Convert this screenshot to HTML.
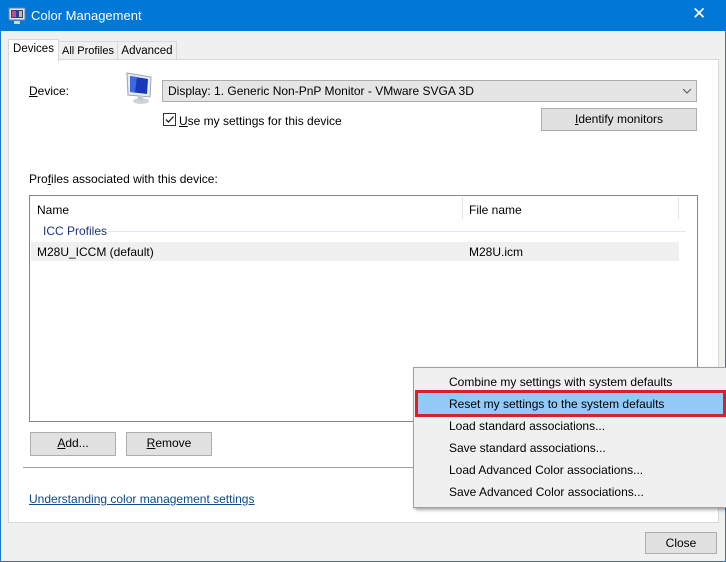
<!DOCTYPE html>
<html><head><style>
*{margin:0;padding:0;box-sizing:border-box}
body{width:726px;height:562px;overflow:hidden;font-family:"Liberation Sans",sans-serif;font-size:12px;color:#000;background:#f0f0f0;position:relative}
.a{position:absolute}
.btn{position:absolute;background:#e1e1e1;border:1px solid #adadad;text-align:center;line-height:20px;font-size:12px}
u{text-decoration:underline}
.mi{position:absolute;left:449px;font-size:12px}
</style></head><body>
<div class="a" style="left:0;top:0;width:726px;height:562px;border:1px solid #1979ca;border-top:none"></div>
<div class="a" style="left:0;top:0;width:726px;height:31px;background:#0078d7"></div>
<svg class="a" style="left:8px;top:7px" width="18" height="18"><rect x="1" y="1" width="16" height="12" fill="#dfe6ef" stroke="#6b7f99"/><rect x="3" y="3" width="12" height="8" fill="#2a3f99"/><rect x="4" y="4" width="4" height="6" fill="#c84a8c"/><rect x="11" y="4" width="3" height="6" fill="#e0c040"/><rect x="6" y="14" width="6" height="3" fill="#cfd6de"/></svg>
<div class="a" style="left:31px;top:8px;color:#fff;font-size:13px">Color Management</div>
<div class="a" style="left:692px;top:4px;color:#fff;font-size:17px">✕</div>

<div class="a" style="left:8px;top:59px;width:711px;height:464px;background:#fff;border:1px solid #d9d9d9"></div>
<div class="a" style="left:8px;top:39px;width:51px;height:22px;background:#fff;border:1px solid #d9d9d9;border-bottom:none;text-align:center;line-height:18px;font-size:11.5px">Devices</div>
<div class="a" style="left:59px;top:41px;width:59px;height:19px;background:#f0f0f0;border:1px solid #d9d9d9;border-left:none;text-align:center;line-height:18px;font-size:11px">All Profiles</div>
<div class="a" style="left:118px;top:41px;width:59px;height:19px;background:#f0f0f0;border:1px solid #d9d9d9;border-left:none;text-align:center;line-height:18px;font-size:11.5px">Advanced</div>

<div class="a" style="left:29px;top:84px"><u>D</u>evice:</div>
<svg class="a" style="left:124px;top:71px" width="32" height="34"><path d="M3 2 L27 6 L26 26 L4 24Z" fill="#e8ecf0" stroke="#9aa4ae"/><path d="M6 5 L24 8 L23 23 L6 21Z" fill="#1838b8"/><path d="M6 5 L13 6 L11 21 L6 21Z" fill="#3d6ae0"/><ellipse cx="17" cy="30" rx="8" ry="3" fill="#d0d4d8"/><rect x="14" y="25" width="5" height="4" fill="#c4c8cc"/></svg>
<div class="a" style="left:162px;top:80px;width:535px;height:22px;background:#e5e5e5;border:1px solid #acacac;padding-left:5px;line-height:20px">Display: 1. Generic Non-PnP Monitor - VMware SVGA 3D</div>
<svg class="a" style="left:682px;top:87px" width="10" height="8"><path d="M1 2 L5 6 L9 2" fill="none" stroke="#555"/></svg>
<div class="a" style="left:163px;top:113px;width:13px;height:13px;border:1px solid #333;background:#fff"></div>
<svg class="a" style="left:163px;top:113px" width="13" height="13"><path d="M3 6.5 L5.5 9 L10.5 3.5" fill="none" stroke="#222" stroke-width="1.3"/></svg>
<div class="a" style="left:179px;top:114px"><u>U</u>se my settings for this device</div>
<div class="btn" style="left:541px;top:108px;width:156px;height:23px"><u>I</u>dentify monitors</div>

<div class="a" style="left:29px;top:172px">Pro<u>f</u>iles associated with this device:</div>
<div class="a" style="left:29px;top:195px;width:669px;height:227px;border:1px solid #828790;background:#fff"></div>
<div class="a" style="left:37px;top:203px">Name</div>
<div class="a" style="left:462px;top:197px;width:1px;height:22px;background:#e5e5e5"></div>
<div class="a" style="left:678px;top:197px;width:1px;height:22px;background:#e5e5e5"></div>
<div class="a" style="left:469px;top:203px">File name</div>
<div class="a" style="left:43px;top:224px;color:#1e3287">ICC Profiles</div>
<div class="a" style="left:108px;top:231px;width:578px;height:1px;background:#e2e6ee"></div>
<div class="a" style="left:31px;top:242px;width:648px;height:19px;background:#f0f0f0"></div>
<div class="a" style="left:37px;top:245px">M28U_ICCM (default)</div>
<div class="a" style="left:469px;top:245px">M28U.icm</div>

<div class="btn" style="left:30px;top:432px;width:86px;height:24px"><u>A</u>dd...</div>
<div class="btn" style="left:126px;top:432px;width:86px;height:24px"><u>R</u>emove</div>
<div class="a" style="left:23px;top:467px;width:690px;height:1px;background:#a0a0a0"></div>
<div class="a" style="left:29px;top:492px;color:#0a4a8a"><u>Understanding color management settings</u></div>
<div class="btn" style="left:645px;top:532px;width:72px;height:22px">Close</div>

<div class="a" style="left:413px;top:367px;width:314px;height:141px;background:#f0f0f0;border:1px solid #a0a0a0;box-shadow:2px 2px 3px rgba(0,0,0,.35)"></div>
<div class="a" style="left:417px;top:392px;width:306px;height:22px;background:#91c9f7"></div>
<div class="a" style="left:415px;top:390px;width:311px;height:27px;border:3px solid #d7202a"></div>
<div class="mi" style="top:375px">Combine my settings with system defaults</div>
<div class="mi" style="top:397px">Reset my settings to the system defaults</div>
<div class="mi" style="top:419px">Load standard associations...</div>
<div class="mi" style="top:441px">Save standard associations...</div>
<div class="mi" style="top:463px">Load Advanced Color associations...</div>
<div class="mi" style="top:485px">Save Advanced Color associations...</div>
</body></html>
